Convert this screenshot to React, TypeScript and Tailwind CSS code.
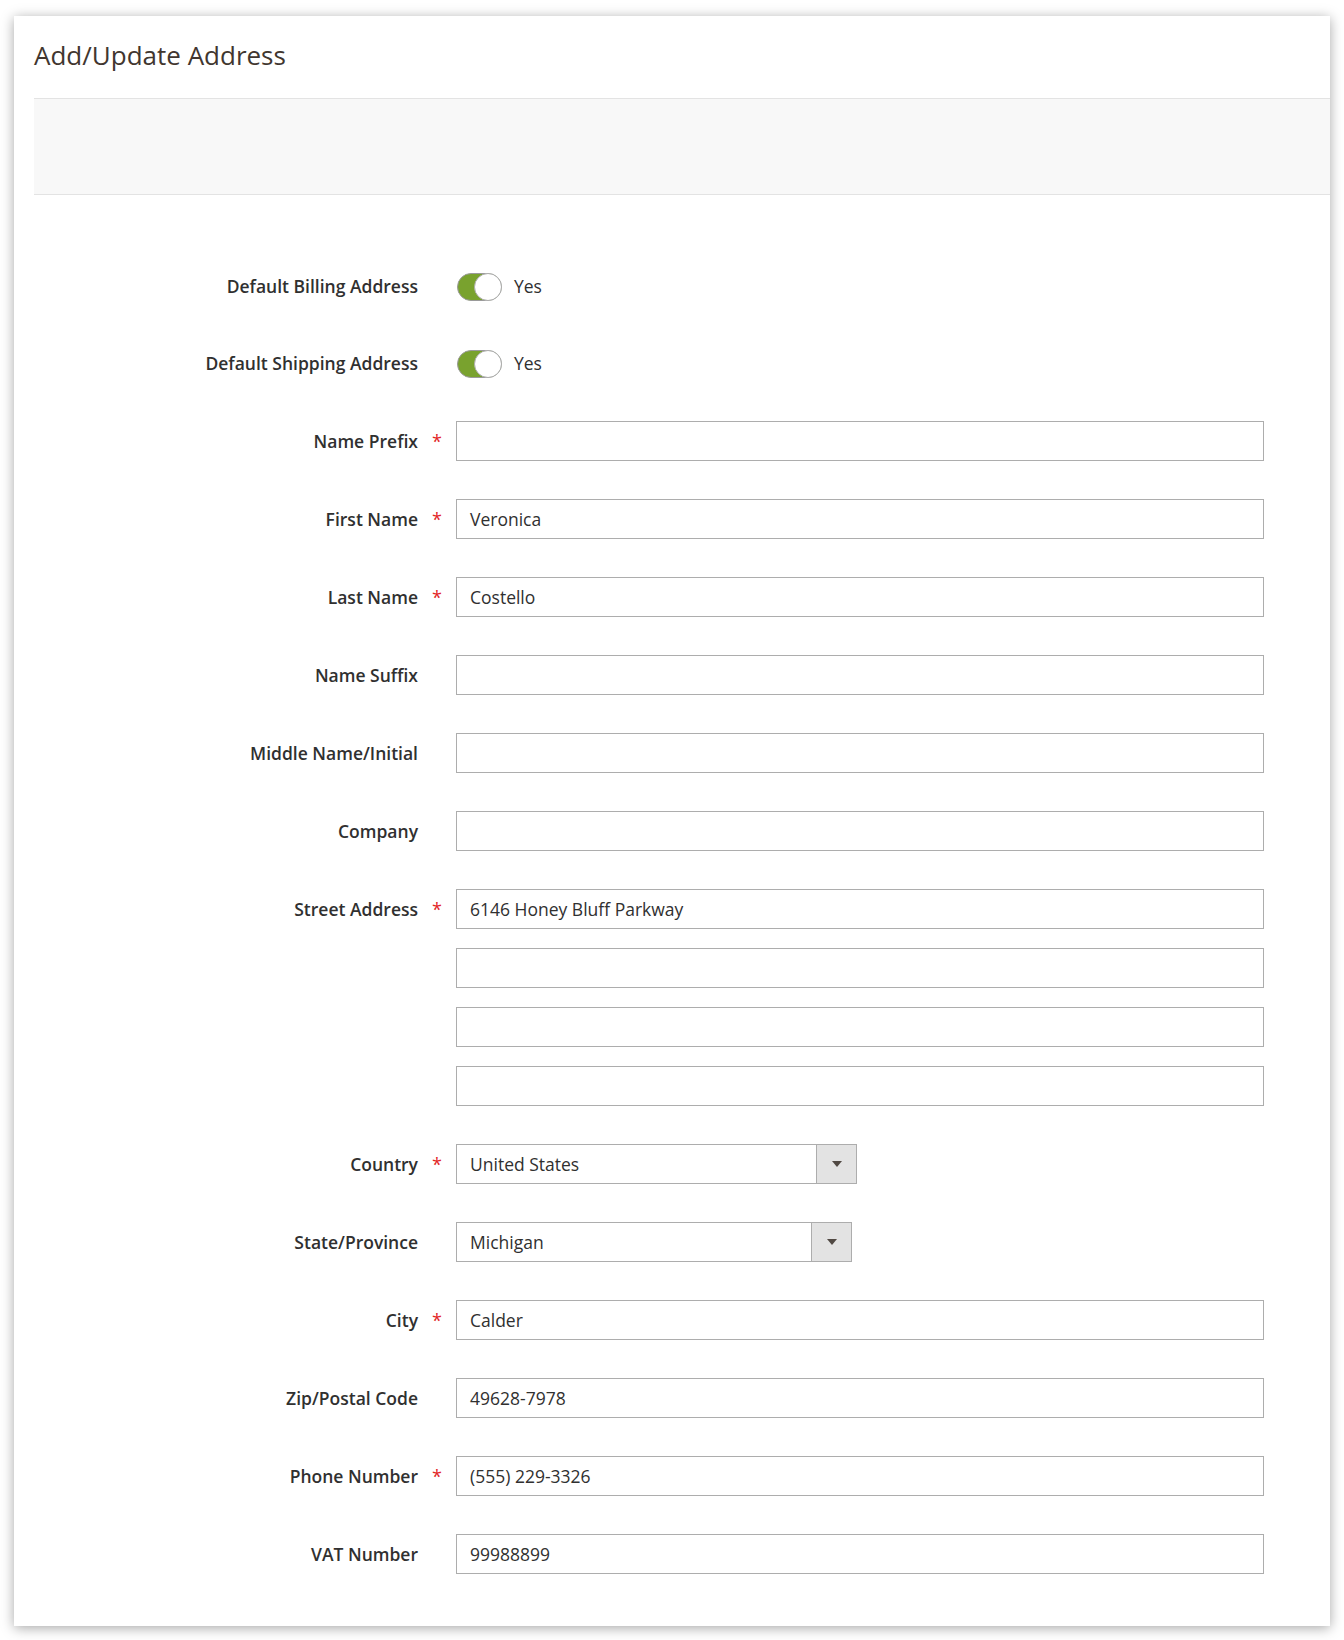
import React from "react";

const font = { fontFamily: '"Open Sans", "Noto Sans", Arial, sans-serif' };

function Label({ text, required }: { text: string; required?: boolean }) {
  return (
    <>
      <div className="w-[384px] shrink-0 text-right text-[17.5px] font-semibold text-[#303030] leading-[40px]">
        {text}
      </div>
      <div className="w-[38px] shrink-0 pl-[14px] text-[18px] leading-[40px] text-[#e22626]">
        {required ? "*" : ""}
      </div>
    </>
  );
}

function TextInput({ value }: { value?: string }) {
  return (
    <div className="w-[808px] h-[40px] border border-[#adadad] bg-white flex items-center px-[13px] text-[17.5px] text-[#303030]">
      {value}
    </div>
  );
}

function Row({ label, required, value }: { label: string; required?: boolean; value?: string }) {
  return (
    <div className="flex items-start">
      <Label text={label} required={required} />
      <TextInput value={value} />
    </div>
  );
}

function Toggle({ label }: { label: string }) {
  return (
    <div className="flex items-center h-[39px]">
      <div className="w-[384px] shrink-0 text-right text-[17.5px] font-semibold text-[#303030]">{label}</div>
      <div className="w-[39px] shrink-0" />
      <div className="relative w-[45px] h-[28px] rounded-full bg-[#79a22e] border border-[#9a9a9a]">
        <div className="absolute right-[-1px] top-[-1px] w-[28px] h-[28px] rounded-full bg-white border border-[#adadad]" />
      </div>
      <div className="ml-[12px] text-[17.5px] text-[#303030]">Yes</div>
    </div>
  );
}

function Select({ value, width }: { value: string; width: number }) {
  return (
    <div
      className="h-[40px] border border-[#adadad] bg-white flex items-stretch text-[17.5px] text-[#303030]"
      style={{ width }}
    >
      <div className="flex-1 flex items-center px-[13px]">{value}</div>
      <div className="w-[40px] bg-[#e3e3e3] border-l border-[#adadad] flex items-center justify-center">
        <svg width="10" height="7" viewBox="0 0 10 7">
          <path d="M0 0 H10 L5 6 Z" fill="#514943" />
        </svg>
      </div>
    </div>
  );
}

export default function App() {
  return (
    <div className="bg-white min-h-[1640px] pt-[16px] pl-[14px]" style={font}>
      <div className="w-[1316px] bg-white shadow-[0_2px_12px_rgba(0,0,0,0.35)] pl-[20px] pb-[52px]">
        <div className="pt-[21px] h-[58px] text-[26px] leading-[36px] text-[#41362f]">Add/Update Address</div>
        <div className="mt-[24px] h-[97px] bg-[#f8f8f8] border-t border-b border-[#e3e3e3]" />
        <div className="mt-[72px] flex flex-col gap-[38px]">
          <Toggle label="Default Billing Address" />
          <Toggle label="Default Shipping Address" />
          <Row label="Name Prefix" required />
          <Row label="First Name" required value="Veronica" />
          <Row label="Last Name" required value="Costello" />
          <Row label="Name Suffix" />
          <Row label="Middle Name/Initial" />
          <Row label="Company" />
          <div className="flex items-start">
            <Label text="Street Address" required />
            <div className="flex flex-col gap-[19px]">
              <TextInput value="6146 Honey Bluff Parkway" />
              <TextInput />
              <TextInput />
              <TextInput />
            </div>
          </div>
          <div className="flex items-start">
            <Label text="Country" required />
            <Select value="United States" width={401} />
          </div>
          <div className="flex items-start">
            <Label text="State/Province" />
            <Select value="Michigan" width={396} />
          </div>
          <Row label="City" required value="Calder" />
          <Row label="Zip/Postal Code" value="49628-7978" />
          <Row label="Phone Number" required value="(555) 229-3326" />
          <Row label="VAT Number" value="99988899" />
        </div>
      </div>
    </div>
  );
}
